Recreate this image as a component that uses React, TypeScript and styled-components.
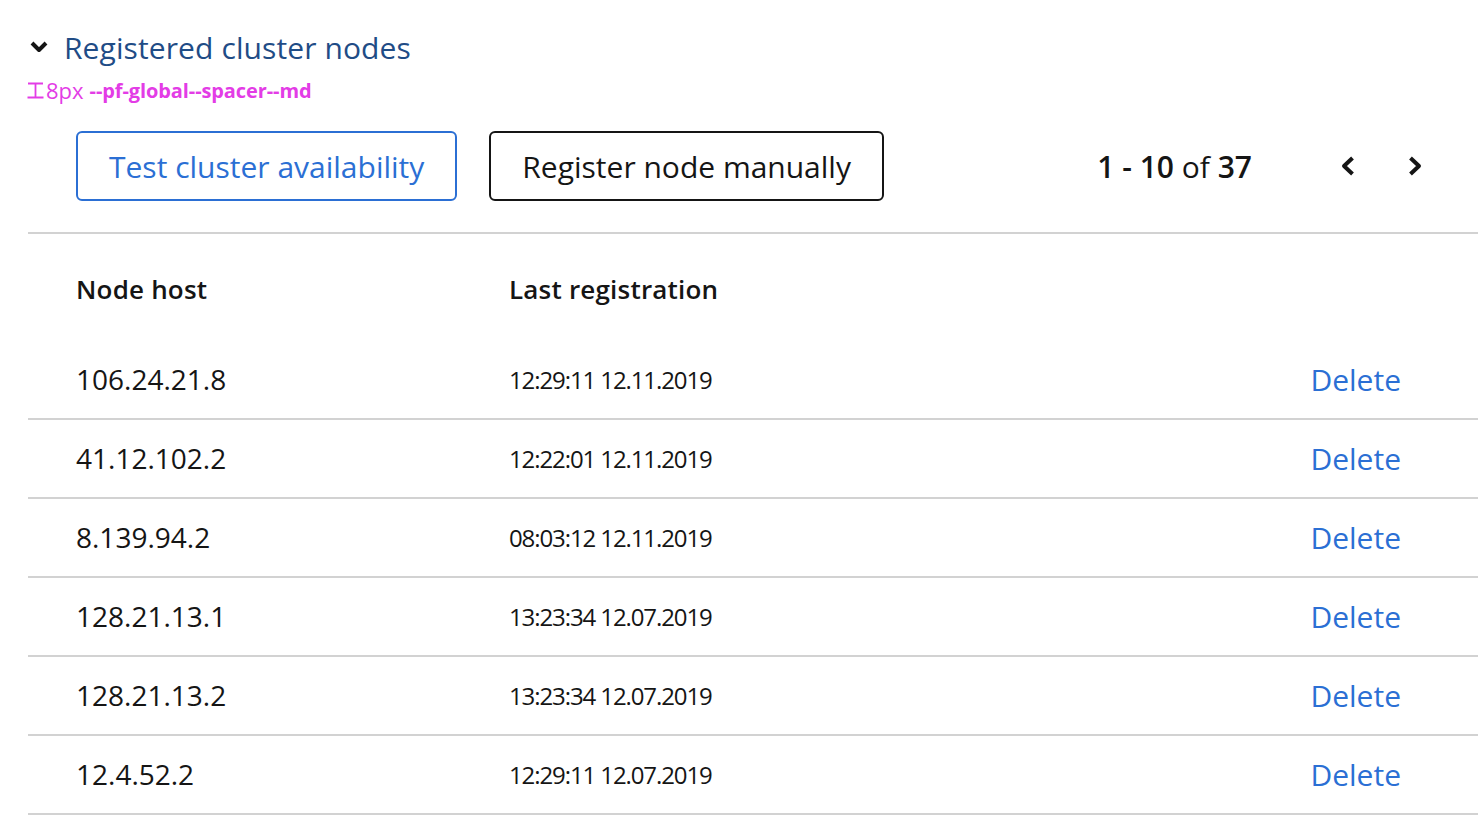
import React from "react";
import styled, { createGlobalStyle } from "styled-components";

const Global = createGlobalStyle`
  html, body { margin: 0; padding: 0; background: #fff; }
  body { font-family: "Open Sans", "Noto Sans", sans-serif; color: #151515; }
  * { box-sizing: border-box; }
`;

const Page = styled.div`
  padding: 26px 0 0 28px;
  width: 1478px;
  overflow: hidden;
`;

const SectionHeader = styled.div`
  display: flex;
  align-items: center;
  gap: 16px;
  height: 42px;
  padding-left: 2px;
`;

const Title = styled.h2`
  margin: 0;
  font-weight: 400;
  font-size: 30px;
  color: #1f4c86;
  letter-spacing: 0.1px;
`;

const Annotation = styled.div`
  display: flex;
  align-items: center;
  height: 28px;
  margin-top: 8px;
  margin-left: -1px;
  color: #e33ce6;
  font-size: 22px;
`;

const AnnoValue = styled.span`
  margin-left: 2px;
`;

const AnnoVar = styled.span`
  margin-left: 6px;
  font-weight: 700;
  font-size: 20px;
  letter-spacing: -0.1px;
`;

const Toolbar = styled.div`
  display: flex;
  align-items: center;
  margin-top: 27px;
  padding: 0 0 31px 48px;
  border-bottom: 2px solid #d2d2d2;
`;

const Button = styled.button<{ $variant: "primary" | "plain" }>`
  height: 70px;
  padding: 0 31px;
  border-radius: 6px;
  background: #fff;
  font-family: inherit;
  font-size: 30px;
  border: 2px solid ${(p) => (p.$variant === "primary" ? "#2b6fd4" : "#151515")};
  color: ${(p) => (p.$variant === "primary" ? "#2b6fd4" : "#151515")};
  margin-right: 32px;
`;

const Spacer = styled.div`
  flex: 1;
`;

const Pagination = styled.div`
  display: flex;
  align-items: center;
  padding-right: 29px;
  font-size: 30px;
`;

const Count = styled.span`
  margin-right: 61px;
  b { font-weight: 600; }
`;

const NavButton = styled.span`
  display: inline-flex;
  width: 68px;
  justify-content: center;
  align-items: center;
`;

const Table = styled.div`
  display: grid;
  grid-template-columns: 481px 1fr auto;
`;

const HeadCell = styled.div<{ $first?: boolean }>`
  padding: 39px 0 36px ${(p) => (p.$first ? "48px" : "0")};
  line-height: 32px;
  font-size: 26px;
  font-weight: 600;
  letter-spacing: 0.2px;
`;

const Cell = styled.div<{ $first?: boolean; $last?: boolean; $date?: boolean }>`
  height: 79px;
  display: flex;
  align-items: center;
  padding-bottom: 1px;
  border-bottom: 2px solid #d2d2d2;
  padding-left: ${(p) => (p.$first ? "48px" : "0")};
  padding-right: ${(p) => (p.$last ? "77px" : "0")};
  font-size: ${(p) => (p.$date ? 24 : 28)}px;
  letter-spacing: ${(p) => (p.$date ? "-1.1px" : "0")};
`;

const LinkButton = styled.span`
  color: #2b6fd4;
  font-size: 30px;
`;

const ChevronDown = () => (
  <svg width="18" height="12" viewBox="0 0 18 12" fill="none" stroke="#151515" strokeWidth="4" strokeLinejoin="round">
    <polyline points="2,2 9,9 16,2" />
  </svg>
);

const AngleLeft = () => (
  <svg width="15" height="20" viewBox="0 0 15 20" fill="none" stroke="#151515" strokeWidth="4" strokeLinejoin="round">
    <polyline points="12.5,2 4,10 12.5,18" />
  </svg>
);

const AngleRight = () => (
  <svg width="15" height="20" viewBox="0 0 15 20" fill="none" stroke="#151515" strokeWidth="4" strokeLinejoin="round">
    <polyline points="2.5,2 11,10 2.5,18" />
  </svg>
);

const IBeam = () => (
  <svg width="17" height="17" viewBox="0 0 17 17" fill="none" stroke="#e33ce6" strokeWidth="1.8">
    <path d="M1 1.5h15M8.5 1.5v14M0.5 15.5h16" />
  </svg>
);

const rows = [
  ["106.24.21.8", "12:29:11 12.11.2019"],
  ["41.12.102.2", "12:22:01 12.11.2019"],
  ["8.139.94.2", "08:03:12 12.11.2019"],
  ["128.21.13.1", "13:23:34 12.07.2019"],
  ["128.21.13.2", "13:23:34 12.07.2019"],
  ["12.4.52.2", "12:29:11 12.07.2019"],
];

export default function App() {
  return (
    <Page>
      <Global />
      <SectionHeader>
        <ChevronDown />
        <Title>Registered cluster nodes</Title>
      </SectionHeader>
      <Annotation>
        <IBeam />
        <AnnoValue>8px</AnnoValue>
        <AnnoVar>--pf-global--spacer--md</AnnoVar>
      </Annotation>
      <Toolbar>
        <Button $variant="primary">Test cluster availability</Button>
        <Button $variant="plain">Register node manually</Button>
        <Spacer />
        <Pagination>
          <Count>
            <b>1 - 10</b> of <b>37</b>
          </Count>
          <NavButton>
            <AngleLeft />
          </NavButton>
          <NavButton>
            <AngleRight />
          </NavButton>
        </Pagination>
      </Toolbar>
      <Table>
        <HeadCell $first>Node host</HeadCell>
        <HeadCell>Last registration</HeadCell>
        <HeadCell />
        {rows.map(([host, date]) => (
          <React.Fragment key={host}>
            <Cell $first>{host}</Cell>
            <Cell $date>{date}</Cell>
            <Cell $last>
              <LinkButton>Delete</LinkButton>
            </Cell>
          </React.Fragment>
        ))}
      </Table>
    </Page>
  );
}
